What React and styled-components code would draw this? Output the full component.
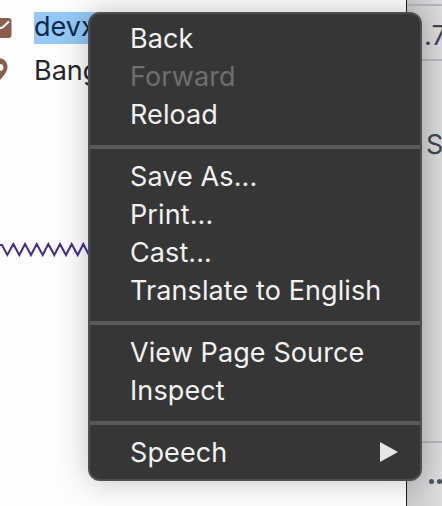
import React from 'react';
import styled, { createGlobalStyle } from 'styled-components';

const GlobalStyle = createGlobalStyle`
  html, body {
    margin: 0;
    padding: 0;
    background: #ffffff;
  }
  body {
    font-family: "Inter", "Liberation Sans", sans-serif;
  }
`;

const Page = styled.div`
  position: relative;
  width: 442px;
  height: 506px;
  overflow: hidden;
  display: flex;
  background: #ffffff;
`;

const Main = styled.div`
  width: 406px;
  flex: none;
  box-sizing: border-box;
  padding-top: 7px;
  background: #fdfdfe;
`;

const ContactRow = styled.div`
  display: flex;
  align-items: center;
  height: 42px;
  font-size: 27px;
  color: #262626;
`;

const IconSlot = styled.div`
  width: 34px;
  flex: none;
  display: flex;
  align-items: center;
  svg {
    display: block;
  }
`;

const Selected = styled.span`
  background: #94c8f7;
  color: #0c2a4a;
  display: inline-block;
  height: 32px;
  line-height: 30px;
  width: 70px;
  overflow: hidden;
`;

const Wave = styled.svg`
  display: block;
  margin-top: 151px;
`;

const Side = styled.div`
  flex: 1;
  border-left: 1px solid #1c1c1c;
  background: linear-gradient(90deg, #c9cacc 0%, #dcdcde 100%);
  color: #3e4650;
  font-size: 27px;
  overflow: hidden;
`;

const SideBlock = styled.div`
  height: ${(p) => p.$h}px;
  box-sizing: border-box;
  padding: ${(p) => p.$top || 0}px 0 0 ${(p) => p.$pad || 0}px;
  border-bottom: 2px solid #b4b5b8;
  line-height: 34px;
  white-space: nowrap;
`;

const Dots = styled.div`
  display: flex;
  gap: 3px;
  padding: 36px 0 0 22px;
`;

const Dot = styled.span`
  width: 5px;
  height: 5px;
  border-radius: 50%;
  background: #4a525c;
  flex: none;
`;

const Menu = styled.div`
  position: absolute;
  left: 88px;
  top: 12px;
  width: 334px;
  height: 469px;
  box-sizing: border-box;
  padding: 7px 0 9px;
  background: #363636;
  border: 2px solid #4c4e50;
  border-radius: 12px;
  box-shadow: 0 0 30px rgba(0, 0, 0, 0.24);
`;

const Item = styled.div`
  height: 38px;
  box-sizing: border-box;
  padding: 0 22px 4px 40px;
  display: flex;
  align-items: center;
  justify-content: space-between;
  font-size: 27px;
  letter-spacing: 0.1px;
  color: ${(p) => (p.$disabled ? '#6f6f6f' : '#f2f2f2')};
  white-space: nowrap;
`;

const Separator = styled.div`
  height: 4px;
  margin: 10px 0;
  background: #595959;
`;

const Arrow = styled.span`
  width: 0;
  height: 0;
  border-left: 18px solid #e6e6e6;
  border-top: 10px solid transparent;
  border-bottom: 10px solid transparent;
`;

const groups = [
  [{ label: 'Back' }, { label: 'Forward', disabled: true }, { label: 'Reload' }],
  [{ label: 'Save As...' }, { label: 'Print...' }, { label: 'Cast...' }, { label: 'Translate to English' }],
  [{ label: 'View Page Source' }, { label: 'Inspect' }],
  [{ label: 'Speech', submenu: true }],
];

const MailIcon = () => (
  <svg width="12" height="20" viewBox="0 0 12 20">
    <rect x="-12" y="0" width="23.5" height="20" rx="3" fill="#8b5e4e" />
    <path d="M-2 10.5 L2.5 9.5 L9 3.5" fill="none" stroke="#ffffff" strokeWidth="2" />
  </svg>
);

const PinIcon = () => (
  <svg width="10" height="24" viewBox="0 0 10 24">
    <path
      fillRule="evenodd"
      d="M-2 0 C4 0 7.5 4 7.5 9 C7.5 14 3 19 -2 24 L-2 0 Z M0 6 A3.4 3.4 0 1 0 0 12.8 A3.4 3.4 0 1 0 0 6 Z"
      fill="#8b5e4e"
    />
  </svg>
);

const App = () => (
  <>
    <GlobalStyle />
    <Page>
      <Main>
        <ContactRow>
          <IconSlot><MailIcon /></IconSlot>
          <Selected>devx</Selected>
        </ContactRow>
        <ContactRow>
          <IconSlot><PinIcon /></IconSlot>
          <span>Bangalore</span>
        </ContactRow>
        <Wave width="90" height="20" viewBox="0 0 90 20">
          <polyline
            points="0,3 2,3 7.3,13 13.3,2 19.3,13 25,2 31,13 36.7,2 42.7,13 48.3,2 54.3,13 60,2 66,13 71.7,2 77.7,13 83.3,2 89,13"
            fill="none"
            stroke="#4a2a8c"
            strokeWidth="2"
          />
        </Wave>
      </Main>
      <Side>
        <SideBlock $h={6} />
        <SideBlock $h={55} $pad={17} $top={13}>.7</SideBlock>
        <SideBlock $h={382} $pad={19} $top={67}>S</SideBlock>
        <Dots>
          <Dot />
          <Dot />
          <Dot />
        </Dots>
      </Side>
      <Menu>
        {groups.map((group, i) => (
          <React.Fragment key={i}>
            {i > 0 && <Separator />}
            {group.map((item) => (
              <Item key={item.label} $disabled={item.disabled}>
                <span>{item.label}</span>
                {item.submenu && <Arrow />}
              </Item>
            ))}
          </React.Fragment>
        ))}
      </Menu>
    </Page>
  </>
);

export default App;
